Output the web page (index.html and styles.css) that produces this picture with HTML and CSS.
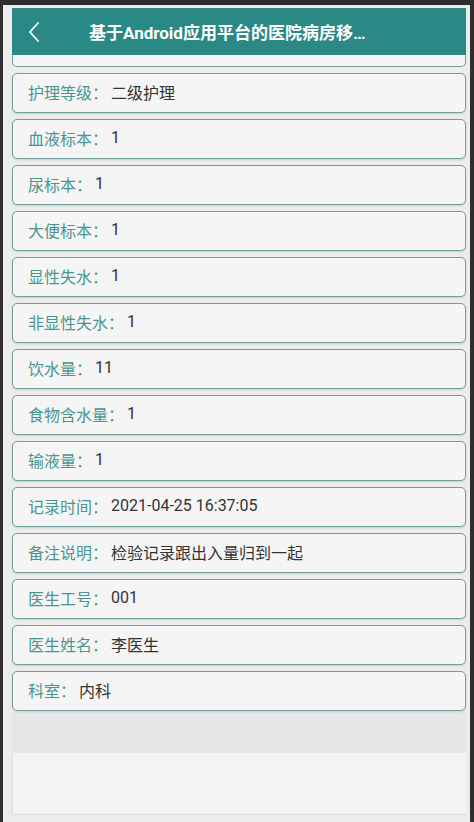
FILE: index.html
```html
<html>
<head>
    <meta charset="utf-8">
    <title>记录详情</title>
    <link rel="stylesheet" href="styles.css">
</head>
<body>

<div class="phone">
    <!-- Naslovna traka -->
    <div class="topbar">
        <span class="back">
            <svg width="14" height="20" viewBox="0 0 14 20"><path d="M11 1 L3 10 L11 19" fill="none" stroke="#fff" stroke-width="1.8" stroke-linecap="round" stroke-linejoin="round"/></svg>
        </span>
        <span class="title">基于Android应用平台的医院病房移动护理系统</span>
    </div>

    <!-- Lista polja -->
    <div class="list">
        <div class="stub"></div>
        <div class="row"><span class="label">护理等级：</span><span class="value">二级护理</span></div>
        <div class="row"><span class="label">血液标本：</span><span class="value">1</span></div>
        <div class="row"><span class="label">尿标本：</span><span class="value">1</span></div>
        <div class="row"><span class="label">大便标本：</span><span class="value">1</span></div>
        <div class="row"><span class="label">显性失水：</span><span class="value">1</span></div>
        <div class="row"><span class="label">非显性失水：</span><span class="value">1</span></div>
        <div class="row"><span class="label">饮水量：</span><span class="value">11</span></div>
        <div class="row"><span class="label">食物含水量：</span><span class="value">1</span></div>
        <div class="row"><span class="label">输液量：</span><span class="value">1</span></div>
        <div class="row"><span class="label">记录时间：</span><span class="value">2021-04-25 16:37:05</span></div>
        <div class="row"><span class="label">备注说明：</span><span class="value">检验记录跟出入量归到一起</span></div>
        <div class="row"><span class="label">医生工号：</span><span class="value">001</span></div>
        <div class="row"><span class="label">医生姓名：</span><span class="value">李医生</span></div>
        <div class="row"><span class="label">科室：</span><span class="value">内科</span></div>
    </div>

    <div class="footer-gray"></div>
    <div class="footer-box"></div>
</div>

</body>
</html>
```

FILE: styles.css
```css
/* Osnova */
body {
    margin: 0;
    background-color: #2e2e2e;
    font-family: Roboto, "Noto Sans CJK SC", sans-serif;
}

/* Okvir telefona */
.phone {
    margin: 5px 4px 0 3px;
    height: 817px;
    background-color: #ececec;
    padding: 3px 4px 0 9px;
    box-sizing: border-box;
    overflow: hidden;
}

/* Naslovna traka */
.topbar {
    position: relative;
    z-index: 2;
    height: 47px;
    background-color: #2b8985;
    display: flex;
    align-items: center;
    color: #fff;
}

.back {
    width: 77px;
    flex: none;
    padding-left: 15px;
    box-sizing: border-box;
    display: flex;
    align-items: center;
}

.title {
    flex: 0 1 auto;
    max-width: 284px;
    font-size: 17px;
    font-weight: bold;
    white-space: nowrap;
    overflow: hidden;
    text-overflow: ellipsis;
    padding-bottom: 1px;
}

/* Lista */
.list {
    display: flex;
    flex-direction: column;
    gap: 6px;
}

.stub {
    height: 12px;
    background-color: #f5f5f5;
    border: 1.5px solid #6f9f9b;
    border-top: none;
    border-radius: 0 0 5px 5px;
    box-sizing: border-box;
}

.row {
    height: 40px;
    background-color: #f5f5f5;
    border: 1.5px solid #6f9f9b;
    border-radius: 5px;
    box-sizing: border-box;
    display: flex;
    align-items: center;
    padding: 0 0 3px 15px;
    font-size: 16px;
    box-shadow: 0 1px 2px rgba(0, 0, 0, 0.12);
}

.label {
    color: #4a9590;
}

.value {
    color: #333;
    margin-left: 3px;
}

/* Donji deo */
.footer-gray {
    margin-top: 1px;
    height: 41px;
    background-color: #e6e5e7;
}

.footer-box {
    height: 62px;
    background-color: #f4f4f4;
    border-left: 1px solid #dcdcdc;
    border-bottom: 1px solid #dcdcdc;
    box-sizing: border-box;
}
```
